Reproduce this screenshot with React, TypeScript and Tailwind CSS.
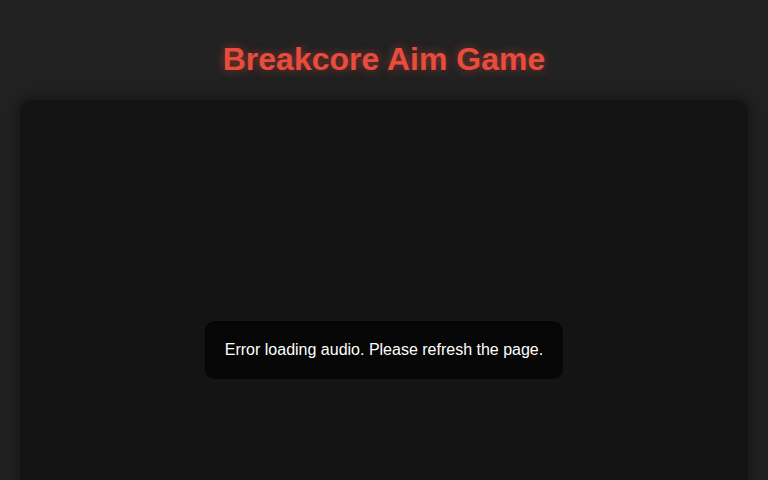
export default function App() {
  return (
    <div
      className="min-h-screen bg-[#222222] p-5 text-white"
      style={{ fontFamily: '"Liberation Sans", Arial, sans-serif' }}
    >
      <h1 className="my-[21.44px] text-center text-[32px] leading-[37px] font-bold text-[#e74c3c] [text-shadow:0_0_10px_rgba(231,76,60,0.5)]">
        Breakcore Aim Game
      </h1>
      <div className="relative h-[500px] w-full rounded-[10px] bg-[#141414] shadow-[0_0_20px_rgba(0,0,0,0.5)]">
        <div className="absolute top-1/2 left-1/2 -translate-x-1/2 -translate-y-1/2 whitespace-nowrap rounded-[10px] bg-black/70 p-5 text-center text-base leading-[18px] text-white">
          Error loading audio. Please refresh the page.
        </div>
      </div>
    </div>
  );
}
